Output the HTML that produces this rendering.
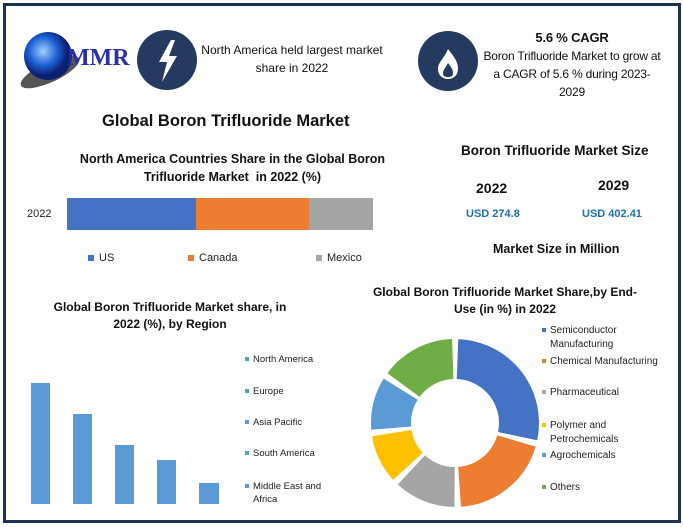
<!DOCTYPE html>
<html><head><style>
body{margin:0;width:683px;height:527px;background:#fff;font-family:"Liberation Sans",sans-serif;position:relative;overflow:hidden}
.b{position:absolute;left:3px;top:3px;width:672px;height:514px;border:3px solid #1f3150}
.t{position:absolute;color:#111;text-align:center}
.bold{font-weight:bold}
.leg{position:absolute;font-size:10px;color:#222}
.sq{display:inline-block;width:5px;height:5px;margin-right:5px;vertical-align:middle}
</style></head><body>
<div class="b"></div>
<svg style="position:absolute;left:10px;top:20px" width="125" height="80">
<defs><radialGradient id="g" cx="40%" cy="40%"><stop offset="0" stop-color="#9fd0ff"/><stop offset="0.6" stop-color="#1c5fd6"/><stop offset="1" stop-color="#0b1f70"/></radialGradient></defs>
<ellipse cx="40" cy="52" rx="32" ry="10" fill="#555" transform="rotate(-25 40 52)"/>
<circle cx="38" cy="36" r="24" fill="url(#g)"/>
<text x="57" y="45" font-family="Liberation Serif" font-weight="bold" font-size="24" fill="#2a2fb0">MMR</text>
</svg>
<svg style="position:absolute;left:137px;top:30px" width="60" height="60"><circle cx="30" cy="30" r="30" fill="#243a5e"/><path d="M34 10 L22 32 L30 32 L25 52 L40 26 L32 26 L38 10Z" fill="#fff"/></svg>
<div class="t" style="left:196px;top:41px;width:192px;font-size:12px;line-height:18px">North America held largest market share in 2022</div>
<svg style="position:absolute;left:418px;top:31px" width="60" height="60"><circle cx="30" cy="30" r="30" fill="#243a5e"/><path d="M30 18 C36 26 40 30 40 38 C40 44 36 48 30 48 C24 48 20 44 20 38 C20 31 26 28 30 18Z" fill="#fff"/><path d="M30 32 C33 36 35 38 35 42 C35 45 33 46 30 46 C27 46 25 45 25 42 C25 39 28 36 30 32Z" fill="#243a5e"/></svg>
<div class="t" style="left:482px;top:29px;width:180px;font-size:12px;line-height:18px;letter-spacing:-0.2px"><span class="bold" style="font-size:13px">5.6 % CAGR</span><br>Boron Trifluoride Market to grow at a CAGR of 5.6 % during 2023-<br>2029</div>
<div class="t bold" style="left:102px;top:112px;font-size:16.5px">Global Boron Trifluoride Market</div>
<div class="t bold" style="left:70px;top:150px;width:325px;font-size:12.5px;line-height:18px">North America Countries Share in the Global Boron Trifluoride Market &nbsp;in 2022 (%)</div>
<div class="leg" style="left:27px;top:208px;font-size:11px">2022</div>
<div style="position:absolute;left:67px;top:198px;width:129px;height:32px;background:#4472c4"></div>
<div style="position:absolute;left:196px;top:198px;width:113px;height:32px;background:#ed7d31"></div>
<div style="position:absolute;left:309px;top:198px;width:64px;height:32px;background:#a5a5a5"></div>
<div class="leg" style="left:88px;top:252px;font-size:11px"><span class="sq" style="background:#4472c4;width:6px;height:6px"></span>US</div>
<div class="leg" style="left:188px;top:252px;font-size:11px"><span class="sq" style="background:#ed7d31;width:6px;height:6px"></span>Canada</div>
<div class="leg" style="left:316px;top:252px;font-size:11px"><span class="sq" style="background:#a5a5a5;width:6px;height:6px"></span>Mexico</div>
<div class="t bold" style="left:461px;top:143px;font-size:13.5px">Boron Trifluoride Market Size</div>
<div class="t bold" style="left:476px;top:180px;font-size:14px">2022</div>
<div class="t bold" style="left:598px;top:177px;font-size:14px">2029</div>
<div class="t bold" style="left:466px;top:208px;font-size:11px;color:#1e6fb0">USD 274.8</div>
<div class="t bold" style="left:582px;top:208px;font-size:11px;color:#1e6fb0">USD 402.41</div>
<div class="t bold" style="left:493px;top:242px;font-size:12.5px">Market Size in Million</div>
<div class="t bold" style="left:40px;top:299px;width:260px;font-size:12px;line-height:17px">Global Boron Trifluoride Market share, in 2022 (%), by Region</div>
<div style="position:absolute;left:31px;top:383px;width:19px;height:121px;background:#5b9bd5"></div>
<div style="position:absolute;left:73px;top:414px;width:19px;height:90px;background:#5b9bd5"></div>
<div style="position:absolute;left:115px;top:445px;width:19px;height:59px;background:#5b9bd5"></div>
<div style="position:absolute;left:157px;top:460px;width:19px;height:44px;background:#5b9bd5"></div>
<div style="position:absolute;left:199px;top:483px;width:20px;height:21px;background:#5b9bd5"></div>
<div class="leg" style="left:245px;top:354px;font-size:9.5px"><span class="sq" style="background:#5b9bd5;width:4px;height:4px;margin-right:4px"></span>North America</div>
<div class="leg" style="left:245px;top:386px;font-size:9.5px"><span class="sq" style="background:#5b9bd5;width:4px;height:4px;margin-right:4px"></span>Europe</div>
<div class="leg" style="left:245px;top:417px;font-size:9.5px"><span class="sq" style="background:#5b9bd5;width:4px;height:4px;margin-right:4px"></span>Asia Pacific</div>
<div class="leg" style="left:245px;top:448px;font-size:9.5px"><span class="sq" style="background:#5b9bd5;width:4px;height:4px;margin-right:4px"></span>South America</div>
<div class="leg" style="left:245px;top:480px;font-size:9.5px;line-height:13px;width:90px"><span class="sq" style="background:#5b9bd5;width:4px;height:4px;margin-right:4px"></span>Middle East and<br><span style="padding-left:8px">Africa</span></div>
<div class="t bold" style="left:360px;top:284px;width:290px;font-size:12px;line-height:17px">Global Boron Trifluoride Market Share,by End-<br>Use (in %) in 2022</div>
<svg style="position:absolute;left:371px;top:339px" width="168" height="168">
<g transform="rotate(-90 84 84)" fill="none" stroke-width="40">
<circle cx="84" cy="84" r="64" stroke="#4472c4" stroke-dasharray="111.2 400" stroke-dashoffset="-2.5"/>
<circle cx="84" cy="84" r="64" stroke="#ed7d31" stroke-dasharray="77.7 400" stroke-dashoffset="-118.7"/>
<circle cx="84" cy="84" r="64" stroke="#a5a5a5" stroke-dasharray="47.5 400" stroke-dashoffset="-201.4"/>
<circle cx="84" cy="84" r="64" stroke="#ffc000" stroke-dasharray="37.4 400" stroke-dashoffset="-253.9"/>
<circle cx="84" cy="84" r="64" stroke="#5b9bd5" stroke-dasharray="40.8 400" stroke-dashoffset="-296.3"/>
<circle cx="84" cy="84" r="64" stroke="#70ad47" stroke-dasharray="57.6 400" stroke-dashoffset="-342.1"/>
</g></svg>
<div class="leg" style="left:542px;top:324px;line-height:14px"><span class="sq" style="background:#4472c4;width:4px;height:4px;margin-right:4px"></span>Semiconductor<br><span style="padding-left:8px">Manufacturing</span></div>
<div class="leg" style="left:542px;top:356px"><span class="sq" style="background:#ed7d31;width:4px;height:4px;margin-right:4px"></span>Chemical Manufacturing</div>
<div class="leg" style="left:542px;top:387px"><span class="sq" style="background:#a5a5a5;width:4px;height:4px;margin-right:4px"></span>Pharmaceutical</div>
<div class="leg" style="left:542px;top:419px;line-height:14px"><span class="sq" style="background:#ffc000;width:4px;height:4px;margin-right:4px"></span>Polymer and<br><span style="padding-left:8px">Petrochemicals</span></div>
<div class="leg" style="left:542px;top:450px"><span class="sq" style="background:#5b9bd5;width:4px;height:4px;margin-right:4px"></span>Agrochemicals</div>
<div class="leg" style="left:542px;top:482px"><span class="sq" style="background:#70ad47;width:4px;height:4px;margin-right:4px"></span>Others</div>
</body></html>
